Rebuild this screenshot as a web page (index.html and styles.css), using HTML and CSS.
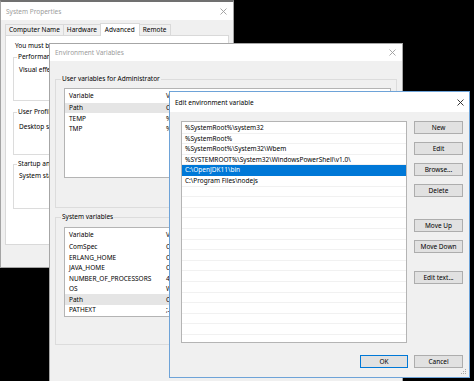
FILE: index.html
```html
<!DOCTYPE html>
<html>
<head>
<meta charset="utf-8">
<link rel="stylesheet" href="styles.css">
</head>
<body>
<div class="win sys">
  <div class="titlebar"><span>System Properties</span><svg class="close" width="7" height="7" viewBox="0 0 7 7"><path d="M0.5 0.5L6.5 6.5M6.5 0.5L0.5 6.5"/></svg></div>
  <div class="tabs">
    <div class="tab">Computer Name</div>
    <div class="tab">Hardware</div>
    <div class="tab active">Advanced</div>
    <div class="tab">Remote</div>
  </div>
  <div class="tabpanel">
    <p class="intro">You must be logged on as an Administrator to make most of these changes.</p>
    <fieldset class="group sgroup g1"><legend>Performance</legend><p>Visual effects, processor scheduling, memory usage, and virtual memory</p></fieldset>
    <fieldset class="group sgroup g2"><legend>User Profiles</legend><p>Desktop settings related to your sign-in</p></fieldset>
    <fieldset class="group sgroup g3"><legend>Startup and Recovery</legend><p>System startup, system failure, and debugging information</p></fieldset>
  </div>
</div>

<div class="win env">
  <div class="titlebar"><span>Environment Variables</span><svg class="close" width="7" height="7" viewBox="0 0 7 7"><path d="M0.5 0.5L6.5 6.5M6.5 0.5L0.5 6.5"/></svg></div>
  <div class="env-body">
    <fieldset class="group egroup user"><legend>User variables for Administrator</legend>
      <div class="listview">
        <div class="lv-head"><span>Variable</span><span>Value</span></div>
        <div class="lv-row sel"><span>Path</span><span>C:\Users\Administrator\AppData\Local\Microsoft\WindowsApps;</span></div>
        <div class="lv-row"><span>TEMP</span><span>%USERPROFILE%\AppData\Local\Temp</span></div>
        <div class="lv-row"><span>TMP</span><span>%USERPROFILE%\AppData\Local\Temp</span></div>
      </div>
    </fieldset>
    <fieldset class="group egroup system"><legend>System variables</legend>
      <div class="listview">
        <div class="lv-head"><span>Variable</span><span>Value</span></div>
        <div class="lv-row"><span>ComSpec</span><span>C:\Windows\system32\cmd.exe</span></div>
        <div class="lv-row"><span>ERLANG_HOME</span><span>C:\Program Files\erl10.4</span></div>
        <div class="lv-row"><span>JAVA_HOME</span><span>C:\OpenJDK11</span></div>
        <div class="lv-row"><span>NUMBER_OF_PROCESSORS</span><span>4</span></div>
        <div class="lv-row"><span>OS</span><span>Windows_NT</span></div>
        <div class="lv-row sel"><span>Path</span><span>C:\Windows\system32;C:\Windows</span></div>
        <div class="lv-row"><span>PATHEXT</span><span>;.COM;.EXE;.BAT;.CMD</span></div>
      </div>
    </fieldset>
  </div>
</div>

<div class="win edit">
  <div class="titlebar"><span>Edit environment variable</span><svg class="close" width="7" height="7" viewBox="0 0 7 7"><path d="M0.5 0.5L6.5 6.5M6.5 0.5L0.5 6.5"/></svg></div>
  <div class="edit-body">
    <div class="edit-main">
      <div class="pathlist">
        <div class="prow">%SystemRoot%\system32</div>
        <div class="prow">%SystemRoot%</div>
        <div class="prow">%SystemRoot%\System32\Wbem</div>
        <div class="prow">%SYSTEMROOT%\System32\WindowsPowerShell\v1.0\</div>
        <div class="prow sel">C:\OpenJDK11\bin</div>
        <div class="prow">C:\Program Files\nodejs</div>
        <div class="prow"></div><div class="prow"></div><div class="prow"></div>
        <div class="prow"></div><div class="prow"></div><div class="prow"></div>
        <div class="prow"></div><div class="prow"></div><div class="prow"></div>
        <div class="prow"></div><div class="prow"></div><div class="prow"></div>
        <div class="prow"></div><div class="prow"></div><div class="prow"></div>
      </div>
      <div class="btncol">
        <button class="btn">New</button>
        <button class="btn">Edit</button>
        <button class="btn">Browse...</button>
        <button class="btn">Delete</button>
        <button class="btn gap-lg">Move Up</button>
        <button class="btn">Move Down</button>
        <button class="btn gap-md">Edit text...</button>
      </div>
    </div>
    <div class="edit-foot">
      <button class="btn ok">OK</button>
      <button class="btn">Cancel</button>
    </div>
  </div>
  <svg class="grip" width="6" height="6" viewBox="0 0 6 6"><rect x="4" y="0" width="1" height="1"/><rect x="2" y="2" width="1" height="1"/><rect x="4" y="2" width="1" height="1"/><rect x="0" y="4" width="1" height="1"/><rect x="2" y="4" width="1" height="1"/><rect x="4" y="4" width="1" height="1"/></svg>
</div>
</body>
</html>
```
FILE: styles.css
```css
* { box-sizing: border-box; }
html, body { margin: 0; padding: 0; }
body {
  width: 474px;
  height: 381px;
  background: #000;
  overflow: hidden;
  position: relative;
  font-family: "Noto Sans", sans-serif;
  font-size: 6.5px;
  color: #000;
}
p { margin: 0; }

.win {
  position: absolute;
  background: #f0f0f0;
  overflow: hidden;
  display: flex;
  flex-direction: column;
}
.titlebar {
  flex: none;
  display: flex;
  align-items: center;
  justify-content: space-between;
  background: #fff;
  white-space: nowrap;
}
.close { stroke: #9c9c9c; stroke-width: 0.9; fill: none; }

/* System Properties */
.sys {
  left: 0;
  top: 0;
  width: 234px;
  height: 268px;
  border: 1px solid #a4a4a4;
  border-top: 2px solid #707070;
}
.sys .titlebar { height: 18px; padding: 0 6px 0 5px; color: #9c9c9c; }
.tabs {
  flex: none;
  height: 15px;
  display: flex;
  align-items: flex-end;
  padding-left: 4px;
}
.tab {
  height: 11px;
  line-height: 10px;
  padding: 0 3px;
  border: 1px solid #d9d9d9;
  border-bottom: none;
  background: #f0f0f0;
  margin-right: -1px;
  white-space: nowrap;
}
.tab.active {
  height: 13px;
  line-height: 12px;
  background: #fff;
  padding: 0 4px;
  position: relative;
  z-index: 1;
  margin-bottom: -1px;
}
.tabpanel {
  flex: none;
  height: 210px;
  margin: 0 4px;
  background: #fff;
  border: 1px solid #d9d9d9;
  padding: 6px 0 0 7px;
  line-height: 8px;
  white-space: nowrap;
  overflow: hidden;
}
.intro { padding-left: 2px; }
.group {
  margin: 0;
  border: 1px solid #dcdcdc;
  min-width: 0;
}
.group legend { padding: 0 1px; line-height: 8px; }
.sgroup { width: 208px; padding: 0 0 0 3px; }
.sgroup p { padding-left: 2px; }
.g1 { margin-top: 3px; padding-top: 5px; padding-bottom: 26px; }
.g2 { margin-top: 7px; padding-top: 7px; padding-bottom: 23px; }
.g3 { margin-top: 5px; padding-top: 4px; padding-bottom: 28px; }

/* Environment Variables */
.env {
  left: 49px;
  top: 43px;
  width: 354px;
  height: 345px;
  border: 1px solid #a6a6a6;
}
.env .titlebar { height: 17px; padding: 0 6px 0 5px; color: #9c9c9c; }
.env-body { padding: 14px 5px 0 5px; }
.egroup { padding: 0 5px; }
.listview {
  margin-left: 3px;
  height: 90px;
  background: #fff;
  border: 1px solid #b4b4b4;
  overflow: hidden;
  white-space: nowrap;
}
.user .listview { margin-top: 5px; margin-bottom: 29px; }
.system { margin-top: 5px; }
.system .listview { margin-top: 6px; margin-bottom: 27px; }
.lv-head, .lv-row {
  display: grid;
  grid-template-columns: 97px 1fr;
  padding-left: 4px;
  align-items: center;
}
.lv-head { height: 13.5px; }
.lv-row { height: 10.5px; }
.lv-row.sel { background: #e5e5e5; }

/* Edit environment variable */
.edit {
  left: 169px;
  top: 91px;
  width: 301px;
  height: 287px;
  border: 1px solid #6ea3d8;
}
.edit .titlebar { height: 20px; padding: 0 5px 0 5px; color: #000; }
.edit .close { stroke: #222; }
.edit-body { padding: 9px 6px 9px 11px; }
.edit-main { display: flex; gap: 7px; }
.pathlist {
  width: 226px;
  height: 222px;
  background: #fff;
  border: 1px solid #b4b4b4;
  padding-top: 1px;
  overflow: hidden;
  white-space: nowrap;
}
.prow {
  height: 10.6px;
  line-height: 10px;
  padding-left: 3px;
  border-bottom: 1px solid #f1f1f1;
}
.prow.sel { background: #0078d7; color: #fff; border-bottom-color: #0078d7; }
.btncol { display: flex; flex-direction: column; gap: 8px; }
.btn {
  width: 49px;
  height: 13px;
  margin: 0;
  padding: 0;
  font: inherit;
  color: #000;
  background: #e1e1e1;
  border: 1px solid #adadad;
  line-height: 11px;
  text-align: center;
  white-space: nowrap;
}
.btncol .gap-lg { margin-top: 14px; }
.btncol .gap-md { margin-top: 10px; }
.edit-foot {
  display: flex;
  justify-content: flex-end;
  gap: 6px;
  margin-top: 12px;
}
.btn.ok { width: 48px; border-color: #0078d7; }
.grip { position: absolute; right: 2px; bottom: 2px; fill: #a8a8a8; }
```
